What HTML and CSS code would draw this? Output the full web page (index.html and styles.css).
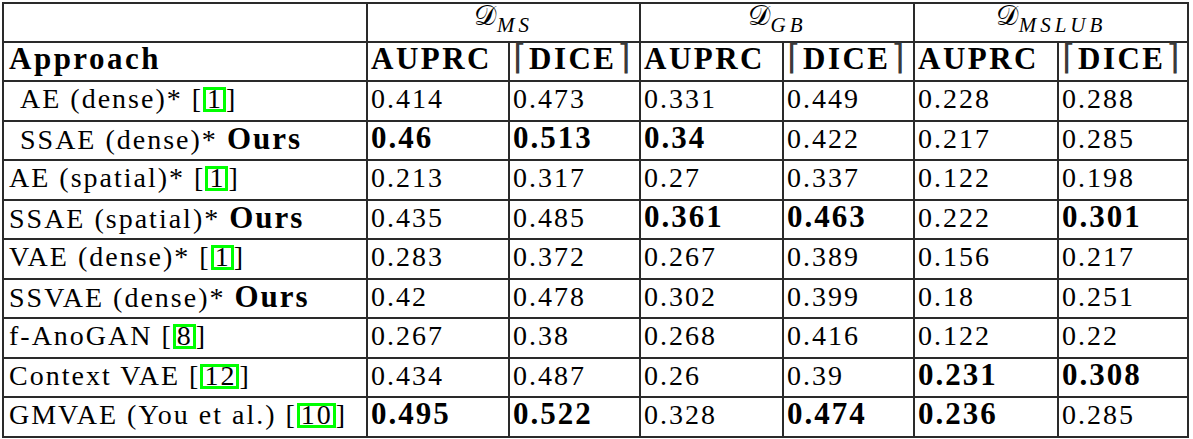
FILE: index.html
```html
<!DOCTYPE html>
<html lang="en">
<head>
    <meta charset="UTF-8">
    <title>Results table</title>
    <link rel="stylesheet" href="styles.css">
</head>
<body>
    <table class="results">
        <colgroup>
            <col class="c-name">
            <col class="c-a"><col class="c-b">
            <col class="c-c"><col class="c-b">
            <col class="c-d"><col class="c-e">
        </colgroup>
        <thead>
            <tr class="head-sets">
                <th></th>
                <th colspan="2" class="set"><span class="cal">𝒟</span><sub>MS</sub></th>
                <th colspan="2" class="set"><span class="cal">𝒟</span><sub>GB</sub></th>
                <th colspan="2" class="set"><span class="cal">𝒟</span><sub>MSLUB</sub></th>
            </tr>
            <tr class="head-metrics">
                <th class="name b">Approach</th>
                <th class="b">AUPRC</th>
                <th class="b"><span class="ceil">⌈</span>DICE<span class="ceil end">⌉</span></th>
                <th class="b">AUPRC</th>
                <th class="b"><span class="ceil">⌈</span>DICE<span class="ceil end">⌉</span></th>
                <th class="b">AUPRC</th>
                <th class="b"><span class="ceil">⌈</span>DICE<span class="ceil end">⌉</span></th>
            </tr>
        </thead>
        <tbody>
            <tr>
                <td class="name indent">AE (dense)* [<span class="ref">1</span>]</td>
                <td>0.414</td><td>0.473</td><td>0.331</td><td>0.449</td><td>0.228</td><td>0.288</td>
            </tr>
            <tr>
                <td class="name indent">SSAE (dense)* <b>Ours</b></td>
                <td class="b">0.46</td><td class="b">0.513</td><td class="b">0.34</td><td>0.422</td><td>0.217</td><td>0.285</td>
            </tr>
            <tr>
                <td class="name">AE (spatial)* [<span class="ref">1</span>]</td>
                <td>0.213</td><td>0.317</td><td>0.27</td><td>0.337</td><td>0.122</td><td>0.198</td>
            </tr>
            <tr>
                <td class="name">SSAE (spatial)* <b>Ours</b></td>
                <td>0.435</td><td>0.485</td><td class="b">0.361</td><td class="b">0.463</td><td>0.222</td><td class="b">0.301</td>
            </tr>
            <tr>
                <td class="name">VAE (dense)* [<span class="ref">1</span>]</td>
                <td>0.283</td><td>0.372</td><td>0.267</td><td>0.389</td><td>0.156</td><td>0.217</td>
            </tr>
            <tr>
                <td class="name">SSVAE (dense)* <b>Ours</b></td>
                <td>0.42</td><td>0.478</td><td>0.302</td><td>0.399</td><td>0.18</td><td>0.251</td>
            </tr>
            <tr>
                <td class="name">f-AnoGAN [<span class="ref">8</span>]</td>
                <td>0.267</td><td>0.38</td><td>0.268</td><td>0.416</td><td>0.122</td><td>0.22</td>
            </tr>
            <tr>
                <td class="name">Context VAE [<span class="ref">12</span>]</td>
                <td>0.434</td><td>0.487</td><td>0.26</td><td>0.39</td><td class="b">0.231</td><td class="b">0.308</td>
            </tr>
            <tr>
                <td class="name">GMVAE (You et al.) [<span class="ref">10</span>]</td>
                <td class="b">0.495</td><td class="b">0.522</td><td>0.328</td><td class="b">0.474</td><td class="b">0.236</td><td>0.285</td>
            </tr>
        </tbody>
    </table>
</body>
</html>
```

FILE: styles.css
```css
body {
    margin: 0;
    padding: 2px 0 0 2px;
    background: #fff;
    color: #000;
    font-family: "Liberation Serif", "Times New Roman", "DejaVu Serif", serif;
}
.results {
    border-collapse: separate;
    border-spacing: 0;
    table-layout: fixed;
    width: 1187px;
    border-top: 2px solid #2a2a2a;
    border-left: 2px solid #2a2a2a;
}
.c-name { width: 364px; }
.c-a { width: 142px; }
.c-b { width: 131px; }
.c-c { width: 143px; }
.c-d { width: 144px; }
.c-e { width: 130px; }
th, td {
    box-sizing: border-box;
    border-right: 2px solid #2a2a2a;
    border-bottom: 2px solid #2a2a2a;
    padding: 2px 0 0 3px;
    vertical-align: top;
    text-align: left;
    font-family: "Liberation Serif", "Times New Roman", serif;
    font-weight: normal;
    font-size: 28px;
    line-height: 30px;
    letter-spacing: 2px;
    white-space: nowrap;
}
thead tr { height: 39px; }
tbody tr { height: 39.5px; }
.name { padding-left: 5px; }
.name.indent { padding-left: 16px; }
.b, b {
    font-weight: bold;
    font-size: 31px;
    letter-spacing: 2px;
}
td.b, th.b { padding-top: 1px; }
th.b { letter-spacing: 2.5px; }
.set {
    text-align: center;
    padding: 0;
    line-height: 23px;
}
.cal {
    font-family: "DejaVu Sans", "DejaVu Serif", serif;
    font-style: normal;
    font-size: 28px;
    line-height: 0;
    letter-spacing: 1px;
}
.set sub {
    font-style: italic;
    font-size: 21px;
    letter-spacing: 4px;
    vertical-align: -7px;
    line-height: 0;
}
.ceil {
    font-family: "DejaVu Sans", sans-serif;
    font-weight: 200;
    font-size: 35px;
    color: #3a3a3a;
    letter-spacing: 0;
    line-height: 0;
    margin-right: 2px;
}
.ceil.end { margin: 0; }
.ref {
    display: inline-block;
    line-height: 18px;
    padding: 0 0 1px 1px;
    border: 3px solid #00ff00;
}
```
